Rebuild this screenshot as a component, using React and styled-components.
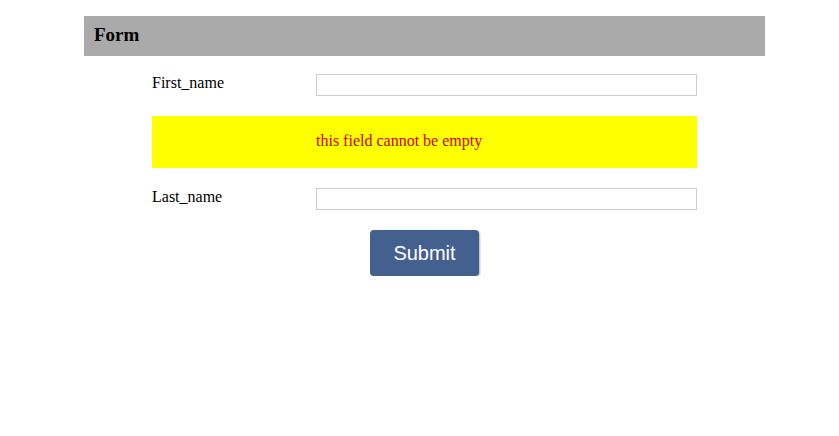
import styled, {createGlobalStyle} from "styled-components";

const GlobalStyle = createGlobalStyle`
body {
  margin: 0;
  background: #fff;
  font-family: "Liberation Serif", "Times New Roman", serif;
}
`;

const Page = styled.div`
width: 681px;
margin: 16px 0 0 84px;
`;
const Header = styled.div`
height: 40px;
background-color: #aaaaaa;
display: flex;
align-items: center;
padding-left: 10px;
`;
const Title = styled.h3`
margin: 0 0 3px 0;
font-size: 19px;
font-weight: bold;
color: #000;
`;
const Form = styled.form`
display: flex;
flex-direction: column;
gap: 20px;
padding: 18px 68px 0;
`;
const Row = styled.div`
display: grid;
grid-template-columns: 164px 1fr;
align-items: ${props => props.error ? 'center' : 'start'};
height: ${props => props.error ? '52px' : 'auto'};
background-color: ${props => props.error ? '#ffff00' : 'transparent'};
`;
const Label = styled.label`
font-size: 16px;
line-height: 18px;
color: #000;
`;
const Input = styled.input`
box-sizing: border-box;
height: 22px;
width: 100%;
margin: 0;
border: 1px solid #cccccc;
padding: 0 4px;
outline: none;
`;
const ErrorText = styled.span`
grid-column: 2;
font-size: 16px;
color: #cc0000;
margin-bottom: 2px;
`;
const Actions = styled.div`
display: flex;
justify-content: center;
`;
const Button = styled.button`
width: 109px;
height: 46px;
border: none;
border-radius: 4px;
background-color: #44608f;
color: #fff;
font-family: "Liberation Sans", Arial, sans-serif;
font-size: 20px;
box-shadow: 1px 1px 2px rgba(0, 0, 0, 0.3);
cursor: pointer;
`;

const App = () => {
    const handleSubmit = event => {
        event.preventDefault();
    }
    return (
        <Page>
            <GlobalStyle/>
            <Header>
                <Title>Form</Title>
            </Header>
            <Form onSubmit={handleSubmit}>
                <Row>
                    <Label htmlFor="first_name">First_name</Label>
                    <Input id="first_name"/>
                </Row>
                <Row error>
                    <ErrorText>this field cannot be empty</ErrorText>
                </Row>
                <Row>
                    <Label htmlFor="last_name">Last_name</Label>
                    <Input id="last_name"/>
                </Row>
                <Actions>
                    <Button type="submit">Submit</Button>
                </Actions>
            </Form>
        </Page>
    )
};

export default App;
